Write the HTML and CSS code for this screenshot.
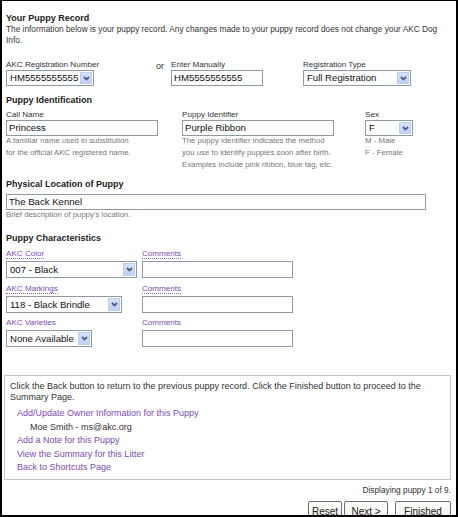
FILE: index.html
```html
<!DOCTYPE html>
<html>
<head>
<meta charset="utf-8">
<title>Your Puppy Record</title>
<link rel="stylesheet" href="styles.css">
</head>
<body>
<div class="frame">
  <div class="sec">
    <div class="h h-first">Your Puppy Record</div>
    <div class="desc">The information below is your puppy record. Any changes made to your puppy record does not change your AKC Dog<br>Info.</div>

    <div class="row r1">
      <div class="c c1">
        <div class="lbl">AKC Registration Number</div>
        <div class="sel w-reg"><span class="val">HM5555555555</span><span class="arr"><svg width="9" height="9" viewBox="0 0 9 9"><polyline points="2,3 4.5,5.5 7,3" fill="none" stroke="#4a5e88" stroke-width="1.8"/></svg></span></div>
      </div>
      <div class="c or">or</div>
      <div class="c c2">
        <div class="lbl">Enter Manually</div>
        <div class="inp w-man">HM5555555555</div>
      </div>
      <div class="c">
        <div class="lbl">Registration Type</div>
        <div class="sel w-type"><span class="val">Full Registration</span><span class="arr"><svg width="9" height="9" viewBox="0 0 9 9"><polyline points="2,3 4.5,5.5 7,3" fill="none" stroke="#4a5e88" stroke-width="1.8"/></svg></span></div>
      </div>
    </div>

    <div class="h h-id">Puppy Identification</div>
    <div class="row r2">
      <div class="c c-call">
        <div class="lbl">Call Name</div>
        <div class="inp w-call">Princess</div>
        <div class="hint">A familiar name used in substitution<br>for the official AKC registered name.</div>
      </div>
      <div class="c c-ident">
        <div class="lbl">Puppy Identifier</div>
        <div class="inp w-ident">Purple Ribbon</div>
        <div class="hint">The puppy identifier indicates the method<br>you use to identify puppies soon after birth.<br>Examples include pink ribbon, blue tag, etc.</div>
      </div>
      <div class="c">
        <div class="lbl">Sex</div>
        <div class="sel w-sex"><span class="val">F</span><span class="arr"><svg width="9" height="9" viewBox="0 0 9 9"><polyline points="2,3 4.5,5.5 7,3" fill="none" stroke="#4a5e88" stroke-width="1.8"/></svg></span></div>
        <div class="hint">M - Male<br>F - Female</div>
      </div>
    </div>

    <div class="h h-loc">Physical Location of Puppy</div>
    <div class="inp w-loc loc">The Back Kennel</div>
    <div class="hint">Brief description of puppy's location.</div>

    <div class="h h-char">Puppy Characteristics</div>
    <div class="row crow crow1">
      <div class="c c-ch">
        <div class="lbl lnk"><span class="dot">AKC Color</span></div>
        <div class="sel tall w-color"><span class="val">007 - Black</span><span class="arr"><svg width="9" height="9" viewBox="0 0 9 9"><polyline points="2,3 4.5,5.5 7,3" fill="none" stroke="#4a5e88" stroke-width="1.8"/></svg></span></div>
      </div>
      <div class="c">
        <div class="lbl lnk"><span class="dot">Comments</span></div>
        <div class="inp tall w-com"></div>
      </div>
    </div>
    <div class="row crow crow2">
      <div class="c c-ch">
        <div class="lbl lnk"><span class="dot">AKC Markings</span></div>
        <div class="sel tall w-mark"><span class="val">118 - Black Brindle</span><span class="arr"><svg width="9" height="9" viewBox="0 0 9 9"><polyline points="2,3 4.5,5.5 7,3" fill="none" stroke="#4a5e88" stroke-width="1.8"/></svg></span></div>
      </div>
      <div class="c">
        <div class="lbl lnk"><span class="dot">Comments</span></div>
        <div class="inp tall w-com"></div>
      </div>
    </div>
    <div class="row crow crow3">
      <div class="c c-ch">
        <div class="lbl lnk">AKC Varieties</div>
        <div class="sel tall w-var"><span class="val">None Available</span><span class="arr"><svg width="9" height="9" viewBox="0 0 9 9"><polyline points="2,3 4.5,5.5 7,3" fill="none" stroke="#4a5e88" stroke-width="1.8"/></svg></span></div>
      </div>
      <div class="c">
        <div class="lbl lnk">Comments</div>
        <div class="inp tall w-com"></div>
      </div>
    </div>
  </div>

  <div class="box">
    <div class="para">Click the Back button to return to the previous puppy record. Click the Finished button to proceed to the<br>Summary Page.</div>
    <div class="links">
      <div class="link">Add/Update Owner Information for this Puppy</div>
      <div class="owner">Moe Smith - ms@akc.org</div>
      <div class="link">Add a Note for this Puppy</div>
      <div class="link">View the Summary for this Litter</div>
      <div class="link">Back to Shortcuts Page</div>
    </div>
  </div>

  <div class="count">Displaying puppy 1 of 9.</div>
  <div class="btns">
    <button class="btn b-reset">Reset</button>
    <button class="btn b-next">Next &gt;</button>
    <button class="btn b-fin">Finished</button>
  </div>
</div>
</body>
</html>
```
FILE: styles.css
```css
html, body {
  margin: 0;
  padding: 0;
  background: #fff;
  overflow: hidden;
}
body {
  font-family: "Liberation Sans", Arial, sans-serif;
  color: #333;
}
.frame {
  width: 458px;
  height: 517px;
  box-sizing: border-box;
  border-style: solid;
  border-color: #000;
  border-width: 1px 2px 2px 2px;
  overflow: hidden;
  background: #fff;
}
.sec {
  padding: 12px 0 0 4px;
}
.h {
  font-size: 9px;
  font-weight: bold;
  line-height: 11px;
  color: #222;
  white-space: nowrap;
}
.desc {
  font-size: 8.3px;
  line-height: 11px;
  white-space: nowrap;
  color: #333;
}
.row {
  display: flex;
  align-items: flex-start;
}
.r1 { margin-top: 13px; }
.c1 { width: 150px; }
.or {
  width: 15px;
  font-size: 9px;
  line-height: 11px;
  padding-top: 2px;
  color: #333;
}
.c2 { width: 132px; }
.lbl {
  font-size: 8.1px;
  line-height: 11px;
  white-space: nowrap;
  color: #333;
}
.sel, .inp {
  box-sizing: border-box;
  height: 16px;
  border: 1px solid #8e9aa6;
  background: #fff;
  font-size: 9.6px;
  color: #111;
  white-space: nowrap;
}
.sel {
  display: flex;
  align-items: stretch;
}
.sel .val {
  flex: 1;
  padding-left: 3px;
  line-height: 14px;
  overflow: hidden;
}
.sel .arr {
  width: 12px;
  margin: 1px;
  box-sizing: border-box;
  border: 1px solid #bccdf0;
  background: linear-gradient(#d5e1fa, #bfd0f5);
  display: flex;
  align-items: center;
  justify-content: center;
  flex: none;
}
.inp {
  padding-left: 2px;
  line-height: 14px;
}
.tall { height: 17px; }
.tall.inp, .tall .val { line-height: 15px; }

.w-reg { width: 88px; }
.w-man { width: 92px; }
.w-type { width: 108px; }

.h-id { margin-top: 9px; }
.r2 { margin-top: 3px; }
.c-call { width: 176px; }
.c-ident { width: 183px; }
.w-call { width: 152px; }
.w-ident { width: 152px; }
.w-sex { width: 48px; }
.hint {
  font-size: 7.8px;
  line-height: 12px;
  margin-top: -1px;
  color: #777;
  white-space: nowrap;
}

.h-loc { margin-top: 8px; }
.loc { margin-top: 4px; }
.w-loc { width: 420px; }

.h-char { margin-top: 12px; }
.crow .lbl { line-height: 12px; }
.crow .sel, .crow .inp { margin-top: 1px; }
.crow1 { margin-top: 4px; }
.crow2 { margin-top: 5px; }
.crow3 { margin-top: 4px; }
.c-ch { width: 136px; }
.w-color { width: 131px; }
.w-mark { width: 116px; }
.w-var { width: 86px; }
.w-com { width: 151px; }
.lnk { color: #7d4bb5; }
.dot {
  border-bottom: 1px dotted #8a70b0;
}

.box {
  margin: 28px 5px 0 2px;
  border: 1px solid #cbc9bc;
  padding: 5px 5px 4px 5px;
  height: 105px;
  box-sizing: border-box;
}
.para {
  font-size: 9px;
  line-height: 11px;
  color: #333;
  white-space: nowrap;
}
.links {
  margin-top: 4px;
  padding-left: 7px;
}
.link, .owner {
  font-size: 9px;
  line-height: 13.5px;
  white-space: nowrap;
}
.link { color: #7d4bb5; }
.owner {
  color: #333;
  padding-left: 13px;
}
.count {
  margin: 5px 5px 0 0;
  text-align: right;
  font-size: 8.3px;
  line-height: 11px;
  color: #333;
}
.btns {
  display: flex;
  justify-content: flex-end;
  margin: 5px 5px 0 0;
}
.btn {
  box-sizing: border-box;
  height: 20px;
  padding: 0;
  border: 1px solid #6e6e6e;
  border-radius: 2px;
  background: linear-gradient(#fdfdfb, #f0efe9);
  font-family: "Liberation Sans", Arial, sans-serif;
  font-size: 10px;
  color: #222;
}
.b-reset { width: 34px; }
.b-next { width: 44px; margin-left: 2px; }
.b-fin { width: 56px; margin-left: 7px; }
```
